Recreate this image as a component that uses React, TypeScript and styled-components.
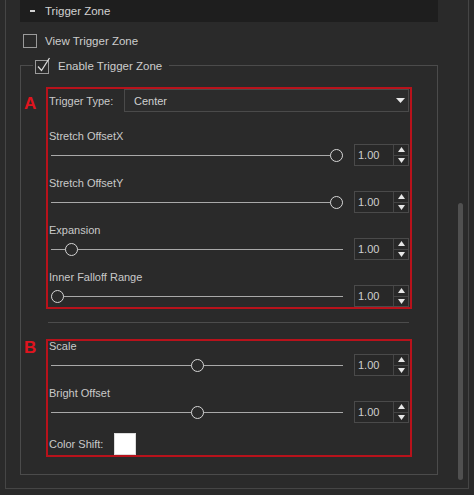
import styled, { createGlobalStyle } from "styled-components"

const GlobalStyle = createGlobalStyle`
    html, body {
        margin: 0;
        padding: 0;
        background: #2a2a2a;
    }
    body {
        font-family: "Liberation Sans", Arial, sans-serif;
        font-size: 11px;
        color: #c9c9c9;
    }
`;

const Frame = styled.div`
    margin-left: 5px;
    width: 464px;
    height: 489px;
    box-sizing: border-box;
    border: 1px solid #454545;
    border-top: none;
    padding-left: 14px;
    display: flex;
`;

const Content = styled.div`
    width: 418px;
    display: flex;
    flex-direction: column;
`;

const ScrollTrack = styled.div`
    margin-left: 20px;
    width: 5px;
    padding: 203px 0 8px;
    display: flex;
`;

const ScrollThumb = styled.div`
    flex: 1;
    background: #505050;
    border-radius: 3px;
`;

const SectionHeader = styled.div`
    height: 22px;
    background: #1e1e1e;
    display: flex;
    align-items: center;
    gap: 10px;
    padding-left: 10px;
    font-size: 11.5px;
    color: #d2d2d2;
`;

const Collapse = styled.span`
    width: 5px;
    height: 1.5px;
    background: #d2d2d2;
`;

const CheckRow = styled.label`
    margin-top: 12px;
    padding-left: 3px;
    height: 14px;
    display: flex;
    align-items: center;
    gap: 8px;
    font-size: 11.5px;
    color: #cdcdcd;
`;

const Box = styled.span`
    width: 14px;
    height: 14px;
    box-sizing: border-box;
    border: 1px solid #9a9a9a;
`;

const Group = styled.fieldset`
    margin: 9px 0 0;
    padding: 0;
    min-width: 0;
    border: 1px solid #4b4b4b;
`;

const Legend = styled.legend`
    margin-left: 12px;
    padding: 0 7px 0 2px;
    height: 17px;
    display: flex;
    align-items: center;
    gap: 7px;
    font-size: 11.5px;
    color: #cdcdcd;
`;

const GroupBody = styled.div`
    padding: 13px 0 17px;
    display: flex;
    flex-direction: column;
`;

const Section = styled.div`
    display: flex;
`;

const Tag = styled.div<{ $top: number }>`
    width: 25px;
    box-sizing: border-box;
    padding: ${p => p.$top}px 0 0 3px;
    font-size: 17px;
    font-weight: bold;
    line-height: 1;
    color: #e0141e;
`;

const RedBox = styled.div`
    width: 366px;
    box-sizing: border-box;
    border: 2px solid #b8121b;
    display: flex;
    flex-direction: column;
    gap: 10px;
`;

const Separator = styled.div`
    margin: 13px 0 16px 27px;
    width: 361px;
    height: 1px;
    background: #4c4c4c;
`;

const TypeRow = styled.div`
    height: 23px;
    margin-bottom: 7px;
    display: flex;
    align-items: center;
    padding-left: 1px;
`;

const Dropdown = styled.div`
    margin-left: auto;
    margin-right: 1px;
    width: 285px;
    height: 23px;
    box-sizing: border-box;
    border: 1px solid #4a4a4a;
    background: #2c2c2c;
    display: flex;
    align-items: center;
    padding: 0 3px 0 9px;
    color: #d0d0d0;
    & svg {
        margin-left: auto;
    }
`;

const ParamLabel = styled.div<{ $pull?: boolean }>`
    line-height: 14px;
    padding-left: 1px;
    margin-top: ${p => (p.$pull ? -2 : 0)}px;
`;

const Controls = styled.div`
    margin-top: 1px;
    height: 22px;
    display: flex;
    align-items: center;
    padding: 0 1px;
`;

const Slider = styled.div`
    position: relative;
    flex: 1;
    height: 22px;
    margin: 0 11px 0 2px;
    display: flex;
    align-items: center;
`;

const Track = styled.div`
    flex: 1;
    height: 1px;
    background: #a9a9a9;
`;

const Thumb = styled.div`
    position: absolute;
    top: 4.5px;
    width: 13px;
    height: 13px;
    box-sizing: border-box;
    border-radius: 50%;
    border: 1.6px solid #d6d6d6;
    background: #2a2a2a;
`;

const Spin = styled.div`
    width: 55px;
    height: 22px;
    box-sizing: border-box;
    border: 1px solid #4a4a4a;
    background: #282828;
    display: flex;
`;

const SpinValue = styled.div`
    flex: 1;
    padding-left: 3px;
    display: flex;
    align-items: center;
    color: #cfcfcf;
`;

const SpinButtons = styled.div`
    width: 14px;
    display: flex;
    flex-direction: column;
    border-left: 1px solid #454545;
`;

const SpinButton = styled.div`
    flex: 1;
    display: flex;
    align-items: center;
    justify-content: center;
    & + & {
        border-top: 1px solid #454545;
    }
`;

const ColorRow = styled.div`
    height: 22px;
    display: flex;
    align-items: center;
    gap: 11px;
    padding-left: 1px;
`;

const Swatch = styled.div`
    width: 22px;
    height: 22px;
    box-sizing: border-box;
    border: 1px solid #dcdcdc;
    background: #ffffff;
`;

const Tri = ({ up }: { up?: boolean }) => (
    <svg width="7" height="5" viewBox="0 0 7 5">
        <path d={up ? "M0 5 L3.5 0 L7 5 Z" : "M0 0 L7 0 L3.5 5 Z"} fill="#e6e6e6" />
    </svg>
);

const Param = ({ label, value, pull }: { label: string; value: number; pull?: boolean }) => (
    <div>
        <ParamLabel $pull={pull}>{label}</ParamLabel>
        <Controls>
            <Slider>
                <Track />
                <Thumb style={{ left: `calc(${value} * (100% - 13px))` }} />
            </Slider>
            <Spin>
                <SpinValue>1.00</SpinValue>
                <SpinButtons>
                    <SpinButton><Tri up /></SpinButton>
                    <SpinButton><Tri /></SpinButton>
                </SpinButtons>
            </Spin>
        </Controls>
    </div>
);

const App = () => {
    return (
        <>
            <GlobalStyle />
            <Frame>
                <Content>
                    <SectionHeader>
                        <Collapse />
                        Trigger Zone
                    </SectionHeader>
                    <CheckRow>
                        <Box />
                        View Trigger Zone
                    </CheckRow>
                    <Group>
                        <Legend>
                            <svg width="16" height="17" viewBox="0 0 16 17">
                                <rect x="0.5" y="3.5" width="13" height="13" fill="none" stroke="#9a9a9a" />
                                <path d="M3 9.5 L6.5 13.5 L14.5 1" fill="none" stroke="#d8d8d8" strokeWidth="1.3" />
                            </svg>
                            Enable Trigger Zone
                        </Legend>
                        <GroupBody>
                            <Section>
                                <Tag $top={8}>A</Tag>
                                <RedBox>
                                    <TypeRow>
                                        Trigger Type:
                                        <Dropdown>
                                            Center
                                            <svg width="9" height="5" viewBox="0 0 9 5">
                                                <path d="M0 0 L9 0 L4.5 5 Z" fill="#e8e8e8" />
                                            </svg>
                                        </Dropdown>
                                    </TypeRow>
                                    <Param label="Stretch OffsetX" value={1} />
                                    <Param label="Stretch OffsetY" value={1} />
                                    <Param label="Expansion" value={0.05} />
                                    <Param label="Inner Falloff Range" value={0} />
                                </RedBox>
                            </Section>
                            <Separator />
                            <Section>
                                <Tag $top={0}>B</Tag>
                                <RedBox>
                                    <Param label="Scale" value={0.5} pull />
                                    <Param label="Bright Offset" value={0.5} />
                                    <ColorRow>
                                        Color Shift:
                                        <Swatch />
                                    </ColorRow>
                                </RedBox>
                            </Section>
                        </GroupBody>
                    </Group>
                </Content>
                <ScrollTrack>
                    <ScrollThumb />
                </ScrollTrack>
            </Frame>
        </>
    )
}

export default App;
